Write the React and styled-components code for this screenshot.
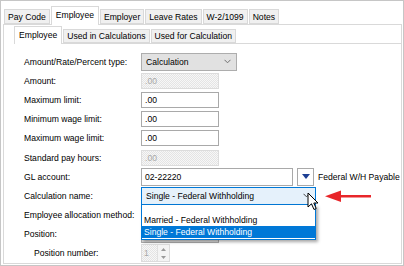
import styled, { createGlobalStyle } from 'styled-components'

const Global = createGlobalStyle`
  html, body { margin: 0; padding: 0; background: #fff; }
  body { font-family: "Liberation Sans", Arial, sans-serif; font-size: 8.6px; color: #000; }
`

const Frame = styled.div`
  position: relative;
  width: 404px;
  height: 266px;
  box-sizing: border-box;
  border: 1px solid #c6c6c6;
  padding: 5px 1px 6px 2px;
  overflow: hidden;
  background: #fff;
  display: flex;
  flex-direction: column;
`

const TabStrip = styled.div`
  display: flex;
  align-items: flex-end;
  padding-left: ${p => p.$indent || 0}px;
  position: relative;
  z-index: 1;
`

const Tab = styled.div`
  box-sizing: border-box;
  height: ${p => (p.$active ? p.$tall : p.$tall - 4)}px;
  padding: 0 ${p => (p.$active ? 4 : 3)}px;
  margin-right: 1px;
  margin-bottom: ${p => (p.$active ? -1 : 0)}px;
  border: 1px solid #d9d9d9;
  border-bottom: ${p => (p.$active ? 'none' : '1px solid #d9d9d9')};
  background: ${p => (p.$active ? '#fff' : '#f0f0f0')};
  display: flex;
  align-items: ${p => (p.$active ? 'flex-start' : 'center')};
  padding-top: ${p => (p.$active ? 3 : 0)}px;
  white-space: nowrap;
`

const OuterPanel = styled.div`
  flex: 1;
  border: 1px solid #d9d9d9;
  padding: 1px 0 0 10px;
  display: flex;
  flex-direction: column;
`

const InnerPanel = styled.div`
  flex: 1;
  border-top: 1px solid #d9d9d9;
  padding: 8px 0 0 10px;
`

const Form = styled.div`
  display: grid;
  grid-template-columns: 117px auto;
  grid-auto-rows: 19.2px;
  align-items: center;
`

const Label = styled.div`
  padding-left: ${p => p.$indent || 0}px;
  white-space: nowrap;
`

const Cell = styled.div`
  display: flex;
  align-items: center;
  gap: 4px;
  position: relative;
`

const TextBox = styled.div`
  box-sizing: border-box;
  width: ${p => p.$w}px;
  height: ${p => p.$h || 16}px;
  border: 1px solid ${p => (p.$disabled ? '#dcdcdc' : '#a9a9a9')};
  padding-left: 3px;
  display: flex;
  align-items: center;
  color: ${p => (p.$disabled ? '#a8a8a8' : '#000')};
  background: ${p =>
    p.$disabled
      ? 'repeating-conic-gradient(#e4e4e4 0 25%, #f7f7f7 0 50%) 0 0 / 2px 2px'
      : '#fff'};
`

const Select = styled.div`
  box-sizing: border-box;
  width: ${p => p.$w}px;
  height: 18px;
  border: 1px solid ${p => (p.$focus ? '#0078d7' : '#adadad')};
  background: ${p => (p.$focus ? '#e5f1fb' : '#e1e1e1')};
  padding: 0 5px 0 4px;
  display: flex;
  align-items: center;
  justify-content: space-between;
`

const DropButton = styled.div`
  box-sizing: border-box;
  width: 17px;
  height: 18px;
  border: 1px solid #a9a9a9;
  background: #fff;
  display: flex;
  align-items: center;
  justify-content: center;
`

const Payable = styled.span`
  white-space: nowrap;
`

const List = styled.div`
  position: absolute;
  left: 0;
  top: 18px;
  box-sizing: border-box;
  width: 175px;
  border: 1px solid #0078d7;
  border-top: none;
  background: #fff;
  padding: 9px 0 1px;
  box-shadow: 2px 2px 3px rgba(0, 0, 0, 0.35);
  z-index: 2;
`

const Option = styled.div`
  height: 12px;
  line-height: 12px;
  padding-left: 2px;
  background: ${p => (p.$selected ? '#0078d7' : 'transparent')};
  color: ${p => (p.$selected ? '#fff' : '#000')};
`

const Spinner = styled.div`
  box-sizing: border-box;
  width: 29px;
  height: 18px;
  border: 1px solid #dcdcdc;
  display: flex;
  background: repeating-conic-gradient(#e4e4e4 0 25%, #f7f7f7 0 50%) 0 0 / 2px 2px;
  color: #a8a8a8;
`

const SpinValue = styled.div`
  flex: 1;
  padding-left: 2px;
  display: flex;
  align-items: center;
`

const SpinArrows = styled.div`
  width: 11px;
  border-left: 1px solid #e0e0e0;
  background: #f4f4f4;
  display: flex;
  flex-direction: column;
  align-items: center;
  justify-content: space-around;
`

const Overlay = styled.svg`
  position: absolute;
  left: ${p => p.$x}px;
  top: ${p => p.$y}px;
  z-index: 5;
`

const Chevron = ({ color = '#707070' }) => (
  <svg width="7" height="5" viewBox="0 0 7 5">
    <path d="M0.5 0.8 L3.5 3.8 L6.5 0.8" fill="none" stroke={color} strokeWidth="1" />
  </svg>
)

const outerTabs = ['Pay Code', 'Employee', 'Employer', 'Leave Rates', 'W-2/1099', 'Notes']
const innerTabs = ['Employee', 'Used in Calculations', 'Used for Calculation']

export default function App() {
  return (
    <>
      <Global />
      <Frame>
        <TabStrip $indent={1}>
          {outerTabs.map(t => (
            <Tab key={t} $tall={19} $active={t === 'Employee'}>{t}</Tab>
          ))}
        </TabStrip>
        <OuterPanel>
          <TabStrip>
            {innerTabs.map(t => (
              <Tab key={t} $tall={18} $active={t === 'Employee'}>{t}</Tab>
            ))}
          </TabStrip>
          <InnerPanel>
            <Form>
              <Label>Amount/Rate/Percent type:</Label>
              <Cell>
                <Select $w={96}>Calculation<Chevron /></Select>
              </Cell>

              <Label>Amount:</Label>
              <Cell><TextBox $w={78} $disabled>.00</TextBox></Cell>

              <Label>Maximum limit:</Label>
              <Cell><TextBox $w={78}>.00</TextBox></Cell>

              <Label>Minimum wage limit:</Label>
              <Cell><TextBox $w={78}>.00</TextBox></Cell>

              <Label>Maximum wage limit:</Label>
              <Cell><TextBox $w={78}>.00</TextBox></Cell>

              <Label>Standard pay hours:</Label>
              <Cell><TextBox $w={78} $disabled>.00</TextBox></Cell>

              <Label>GL account:</Label>
              <Cell>
                <TextBox $w={152} $h={18}>02-22220</TextBox>
                <DropButton>
                  <svg width="8" height="5" viewBox="0 0 8 5">
                    <path d="M0 0 H8 L4 5 Z" fill="#1c3f94" />
                  </svg>
                </DropButton>
                <Payable>Federal W/H Payable</Payable>
              </Cell>

              <Label>Calculation name:</Label>
              <Cell>
                <Select $w={175} $focus>
                  Single - Federal Withholding<Chevron color="#444" />
                </Select>
                <List>
                  <Option>Married - Federal Withholding</Option>
                  <Option $selected>Single - Federal Withholding</Option>
                </List>
              </Cell>

              <Label>Employee allocation method:</Label>
              <Cell><Select $w={78} /></Cell>

              <Label>Position:</Label>
              <Cell><Select $w={78} /></Cell>

              <Label $indent={10}>Position number:</Label>
              <Cell>
                <Spinner>
                  <SpinValue>1</SpinValue>
                  <SpinArrows>
                    <svg width="5" height="3" viewBox="0 0 5 3"><path d="M0 3 L2.5 0 L5 3 Z" fill="#9a9a9a" /></svg>
                    <svg width="5" height="3" viewBox="0 0 5 3"><path d="M0 0 L2.5 3 L5 0 Z" fill="#9a9a9a" /></svg>
                  </SpinArrows>
                </Spinner>
              </Cell>
            </Form>
          </InnerPanel>
        </OuterPanel>

        <Overlay $x={324} $y={188} width="48" height="14" viewBox="0 0 48 14">
          <path d="M14 6 H46 V8.5 H14 Z" fill="#e8262a" />
          <path d="M0 7.2 L16 1.5 L16 13 Z" fill="#e8262a" />
        </Overlay>

        <Overlay $x={306} $y={191} width="13" height="20" viewBox="0 0 13 20">
          <path d="M1 1 V15 L4.5 11.8 L7 17.5 L9.2 16.5 L6.8 11 H11 Z" fill="#fff" stroke="#000" strokeWidth="1" strokeLinejoin="round" />
        </Overlay>
      </Frame>
    </>
  )
}
